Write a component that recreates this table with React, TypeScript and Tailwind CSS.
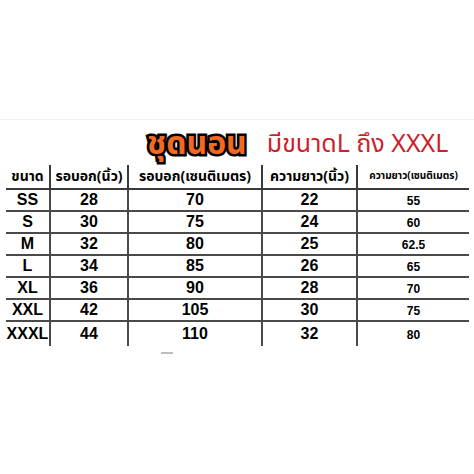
import React from "react";

const rows: [string, string, string, string, string][] = [
  ["SS", "28", "70", "22", "55"],
  ["S", "30", "75", "24", "60"],
  ["M", "32", "80", "25", "62.5"],
  ["L", "34", "85", "26", "65"],
  ["XL", "36", "90", "28", "70"],
  ["XXL", "42", "105", "30", "75"],
  ["XXXL", "44", "110", "32", "80"],
];

const thai = "font-['Noto_Sans_Thai','Noto_Sans','Liberation_Sans',sans-serif]";
const arial = "font-['Liberation_Sans','Noto_Sans_Thai',sans-serif]";

export default function App() {
  return (
    <div className="w-[474px] h-[474px] bg-white flex flex-col overflow-hidden">
      <div className="h-[120px] shrink-0 border-b border-[#f1f1f1]" />
      <div className="h-[45px] shrink-0 flex items-center pl-[147px] gap-[20px]">
        <span
          className={`${thai} text-[32px] font-bold leading-none text-[#f26a21] mt-[2px] [-webkit-text-stroke:5px_#000] [paint-order:stroke_fill]`}
        >
          ชุดนอน
        </span>
        <span className={`${thai} text-[25px] leading-none text-[#cc1f2b] mt-[3px]`}>
          มีขนาดL ถึง XXXL
        </span>
      </div>
      <div className="ml-[6px] grid grid-cols-[45px_78px_134px_95px_111px] text-black">
        {/* header */}
        <div className={`${thai} h-[25px] flex items-center justify-center border-r-2 border-b-2 border-[#3a3a3a] text-[14px] font-bold`}>
          ขนาด
        </div>
        <div className={`${thai} h-[25px] flex items-center justify-center border-r-2 border-b-2 border-[#3a3a3a] text-[14px] font-bold`}>
          รอบอก(นิ้ว)
        </div>
        <div className={`${thai} h-[25px] flex items-center justify-center border-r-2 border-b-2 border-[#3a3a3a] text-[14px] font-bold`}>
          รอบอก(เซนติเมตร)
        </div>
        <div className={`${thai} h-[25px] flex items-center justify-center border-r-2 border-b-2 border-[#3a3a3a] text-[14px] font-bold`}>
          ความยาว(นิ้ว)
        </div>
        <div className={`${thai} h-[25px] flex items-center justify-center border-b-2 border-[#3a3a3a] text-[10px] font-bold`}>
          ความยาว(เซนติเมตร)
        </div>
        {rows.map((r, i) => {
          const last = i === rows.length - 1;
          const hb = last ? "h-[24px]" : "h-[22px] border-b-2";
          return (
            <React.Fragment key={r[0]}>
              <div className={`${arial} ${hb} flex items-center justify-center border-r-2 border-[#4a4a4a] text-[16px] font-bold`}>
                {r[0]}
              </div>
              <div className={`${arial} ${hb} flex items-center justify-center border-r-2 border-[#4a4a4a] text-[16px] font-bold`}>
                {r[1]}
              </div>
              <div className={`${arial} ${hb} flex items-center justify-center border-r-2 border-[#4a4a4a] text-[16px] font-bold`}>
                {r[2]}
              </div>
              <div className={`${arial} ${hb} flex items-center justify-center border-r-2 border-[#4a4a4a] text-[16px] font-bold`}>
                {r[3]}
              </div>
              <div className={`${arial} ${hb} flex items-center justify-center pt-[2px] border-[#4a4a4a] text-[12px] font-bold`}>
                {r[4]}
              </div>
            </React.Fragment>
          );
        })}
      </div>
      <div className="ml-[161px] mt-[6px] w-[12px] h-[2px] bg-[#bdbdbd]" />
    </div>
  );
}
